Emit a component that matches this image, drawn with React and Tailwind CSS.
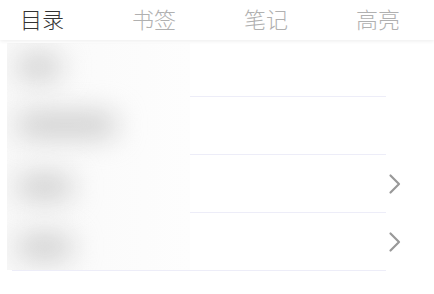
import React from 'react';

const tabs = ['目录', '书签', '笔记', '高亮'];

const rows = [
  { arrow: false, h: 'h-[57px]' },
  { arrow: false, h: 'h-[58px]' },
  { arrow: true, h: 'h-[58px]' },
  { arrow: true, h: 'h-[58px]' },
];

// blurred placeholder lines shown over the left part of the list
const blobs = [
  { w: 'w-[44px]', mt: 'mt-[12px]' },
  { w: 'w-[100px]', mt: 'mt-[34px]' },
  { w: 'w-[56px]', mt: 'mt-[38px]' },
  { w: 'w-[56px]', mt: 'mt-[36px]' },
];

function Chevron() {
  return (
    <svg width="14" height="22" viewBox="0 0 14 22" fill="none">
      <path d="M2.5 2.5 L11 11 L2.5 19.5" stroke="#999" strokeWidth="2.2" strokeLinecap="round" strokeLinejoin="round" />
    </svg>
  );
}

export default function App() {
  return (
    <div
      className="relative w-[434px] h-[294px] bg-white overflow-hidden"
      style={{ fontFamily: '"Noto Sans CJK SC", "Noto Sans", sans-serif' }}
    >
      {/* tabs */}
      <div className="relative z-10 h-10 flex items-center justify-between pl-5 pr-[34px] pb-1 bg-white shadow-[0_1px_4px_rgba(0,0,0,0.08)]">
        {tabs.map((t, i) => (
          <span
            key={t}
            className={`text-[22px] leading-none font-light ${i === 0 ? 'text-[#333]' : 'text-[#b0b0b0]'}`}
          >
            {t}
          </span>
        ))}
      </div>

      {/* list */}
      <div>
        {rows.map((r, i) => (
          <div key={i} className="flex">
            <div className={`ml-3 w-[374px] ${r.h} border-b border-[#ededf8]`} />
            <div className="flex-1 flex items-center pl-[2px]">
              {r.arrow && <Chevron />}
            </div>
          </div>
        ))}
      </div>

      {/* blurred overlay */}
      <div className="absolute left-[7px] top-[43px] w-[183px] h-[227px] bg-gradient-to-r from-[#f9f9f9] to-[#fdfdfd] overflow-hidden flex flex-col items-start pl-[10px]">
        {blobs.map((b, i) => (
          <div key={i} className={`${b.w} ${b.mt} h-[24px] rounded-full bg-[#cbcbcb] blur-[14px]`} />
        ))}
      </div>
    </div>
  );
}
